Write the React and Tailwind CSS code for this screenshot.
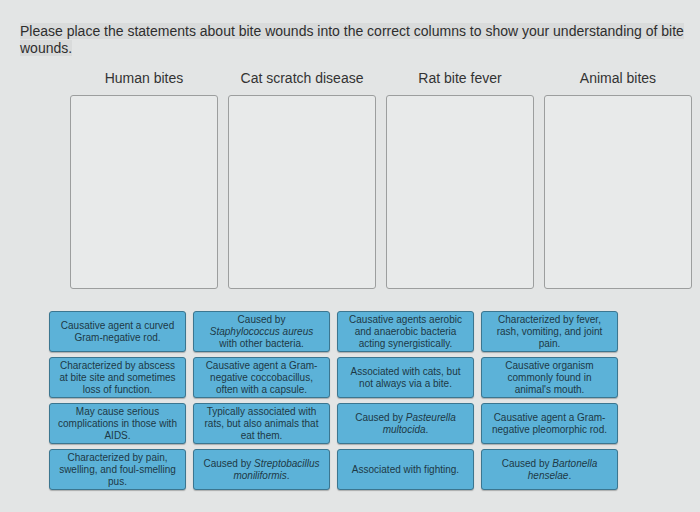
const columns = ['Human bites', 'Cat scratch disease', 'Rat bite fever', 'Animal bites'];

// each statement: array of [text, italic] parts
const statements = [
  [['Causative agent a curved Gram-negative rod.']],
  [['Caused by '], ['Staphylococcus aureus', true], [' with other bacteria.']],
  [['Causative agents aerobic and anaerobic bacteria acting synergistically.']],
  [['Characterized by fever, rash, vomiting, and joint pain.']],
  [['Characterized by abscess at bite site and sometimes loss of function.']],
  [['Causative agent a Gram-negative coccobacillus, often with a capsule.']],
  [['Associated with cats, but not always via a bite.']],
  [["Causative organism commonly found in animal's mouth."]],
  [['May cause serious complications in those with AIDS.']],
  [['Typically associated with rats, but also animals that eat them.']],
  [['Caused by '], ['Pasteurella', true], <br key="b" />, ['multocida', true], ['.']],
  [['Causative agent a Gram-negative pleomorphic rod.']],
  [['Characterized by pain, swelling, and foul-smelling pus.']],
  [['Caused by '], ['Streptobacillus', true], <br key="b" />, ['moniliformis', true], ['.']],
  [['Associated with fighting.']],
  [['Caused by '], ['Bartonella', true], <br key="b" />, ['henselae', true], ['.']],
];

function Tile({ parts }) {
  return (
    <div className="h-[41px] flex items-center justify-center px-2 text-center text-[10px] leading-[12px] text-[#1d3946] bg-[#5cb2d8] border border-[#3b7690] rounded-[3px] shadow-[0_1px_1px_rgba(0,0,0,0.25)]">
      <p>
        {parts.map((p, i) =>
          Array.isArray(p) ? (
            <span key={i} className={p[1] ? 'italic' : ''}>{p[0]}</span>
          ) : (
            p
          )
        )}
      </p>
    </div>
  );
}

export default function App() {
  return (
    <div className="w-[700px] h-[512px] overflow-hidden bg-[#e3e5e5] font-['Liberation_Sans',Arial,sans-serif] text-[#2e2e2e]">
      <div className="pt-[23px] pl-[20px] pr-[12px]">
        <p className="text-[14px] leading-[17px]">
          <span className="bg-[#d9dbdb]">
            Please place the statements about bite wounds into the correct columns to show your understanding of bite wounds.
          </span>
        </p>
      </div>

      <div className="ml-[70px] mt-[13px] grid grid-cols-[148px_148px_148px_148px] gap-x-[10px]">
        {columns.map((c) => (
          <div key={c} className="text-center text-[14px] leading-[17px] text-[#333]">{c}</div>
        ))}
        {columns.map((c) => (
          <div key={c + '-drop'} className="mt-[8px] h-[194px] border border-[#9c9e9e] rounded-[3px] bg-[#e8eaea]" />
        ))}
      </div>

      <div className="ml-[49px] mt-[22px] w-[569px] grid grid-cols-4 gap-x-[7px] gap-y-[5px]">
        {statements.map((parts, i) => (
          <Tile key={i} parts={parts} />
        ))}
      </div>
    </div>
  );
}
